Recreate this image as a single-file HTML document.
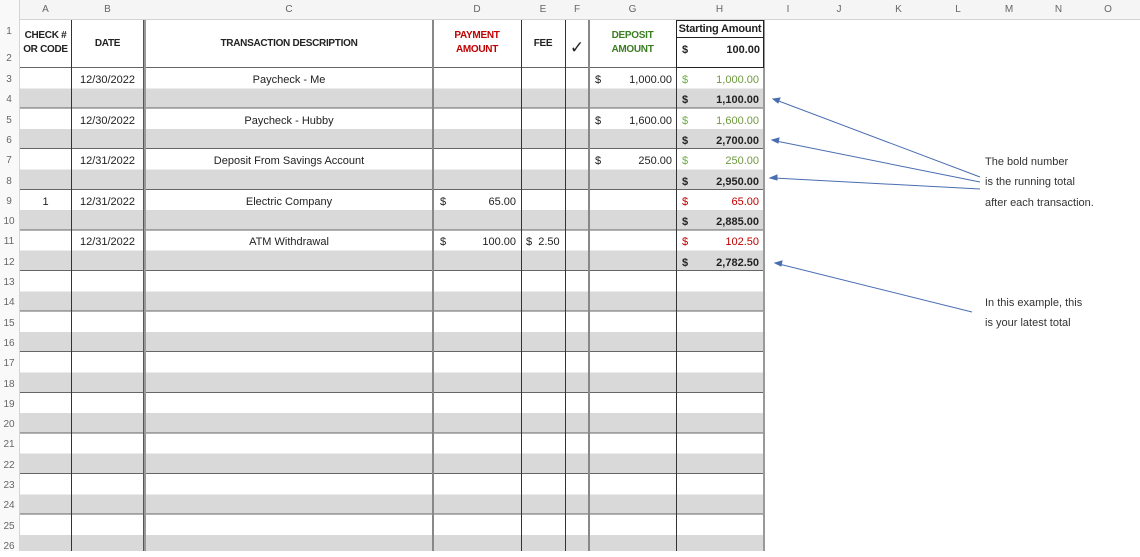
<!DOCTYPE html>
<html><head><meta charset="utf-8"><style>
*{margin:0;padding:0;box-sizing:border-box}
body{width:1140px;height:551px;overflow:hidden;background:#fff;position:relative;font-family:"Liberation Sans",sans-serif;color:#222}
.a{position:absolute;white-space:nowrap}
.ch{top:0;height:20px;font-size:10px;color:#666;text-align:center;line-height:20px}
.rh{left:0;width:18px;font-size:10px;color:#666;text-align:center;height:20px;line-height:20px}
.v{position:absolute;top:20px;bottom:0;width:1px;background:#333}
.t{font-size:11px;line-height:20px;height:20px}
.hd{font-weight:bold;font-size:10px;text-align:center;line-height:14px;letter-spacing:-0.3px}
</style></head><body>
<div class="a" style="left:0;top:0;width:1140px;height:20px;background:#f5f5f5;border-bottom:1px solid #d4d4d4"></div>
<div class="a" style="left:0;top:0;width:20px;height:551px;background:#f9f9f9;border-right:1px solid #d4d4d4"></div>
<div class="a" style="left:20px;top:68px;width:744px;height:483px;background:repeating-linear-gradient(to bottom,#fff 0,#fff 20.3px,#d9d9d9 20.3px,#d9d9d9 39.6px,#666 39.6px,#666 40.6px)"></div>
<div class="a" style="left:20px;top:67px;width:744px;height:1px;background:#666"></div>
<div class="a ch" style="left:20px;width:51px">A</div>
<div class="a ch" style="left:71px;width:73px">B</div>
<div class="a ch" style="left:145px;width:288px">C</div>
<div class="a ch" style="left:433px;width:88px">D</div>
<div class="a ch" style="left:521px;width:44px">E</div>
<div class="a ch" style="left:565px;width:24px">F</div>
<div class="a ch" style="left:589px;width:87px">G</div>
<div class="a ch" style="left:676px;width:87px">H</div>
<div class="a ch" style="left:763px;width:50px">I</div>
<div class="a ch" style="left:813px;width:52px">J</div>
<div class="a ch" style="left:865px;width:67px">K</div>
<div class="a ch" style="left:932px;width:52px">L</div>
<div class="a ch" style="left:984px;width:50px">M</div>
<div class="a ch" style="left:1034px;width:49px">N</div>
<div class="a ch" style="left:1083px;width:50px">O</div>
<div class="a rh" style="top:22px">1</div>
<div class="a rh" style="top:49px">2</div>
<div class="a rh" style="top:70px">3</div><div class="a rh" style="top:90.3px">4</div><div class="a rh" style="top:110.6px">5</div><div class="a rh" style="top:130.9px">6</div><div class="a rh" style="top:151.2px">7</div><div class="a rh" style="top:171.5px">8</div><div class="a rh" style="top:191.8px">9</div><div class="a rh" style="top:212.1px">10</div><div class="a rh" style="top:232.4px">11</div><div class="a rh" style="top:252.7px">12</div><div class="a rh" style="top:273px">13</div><div class="a rh" style="top:293.3px">14</div><div class="a rh" style="top:313.6px">15</div><div class="a rh" style="top:333.9px">16</div><div class="a rh" style="top:354.2px">17</div><div class="a rh" style="top:374.5px">18</div><div class="a rh" style="top:394.8px">19</div><div class="a rh" style="top:415.1px">20</div><div class="a rh" style="top:435.4px">21</div><div class="a rh" style="top:455.7px">22</div><div class="a rh" style="top:476px">23</div><div class="a rh" style="top:496.3px">24</div><div class="a rh" style="top:516.6px">25</div><div class="a rh" style="top:536.9px">26</div>
<div class="v" style="left:71px"></div>
<div class="v" style="left:143px;width:3px;background:#999;border-left:1px solid #555"></div>
<div class="v" style="left:432px;width:2px;background:#888"></div>
<div class="v" style="left:521px"></div>
<div class="v" style="left:565px"></div>
<div class="v" style="left:588px;width:2px;background:#888"></div>
<div class="v" style="left:676px"></div>
<div class="v" style="left:763px;width:2px;background:#999"></div>
<div class="a" style="left:676px;top:20px;width:88px;height:48px;border:1px solid #222;background:#fff"></div>
<div class="a" style="left:676px;top:37px;width:88px;height:1px;background:#222"></div>
<div class="a" style="left:676px;top:21px;width:88px;text-align:center;font-size:11px;font-weight:bold;line-height:16px;letter-spacing:-0.2px">Starting Amount</div>
<div class="a" style="left:682px;top:44px;font-size:11px;font-weight:bold">$</div>
<div class="a" style="left:676px;top:44px;width:84px;text-align:right;font-size:11px;font-weight:bold">100.00</div>
<div class="a hd" style="left:20px;top:29px;width:51px">CHECK #<br>OR CODE</div>
<div class="a hd" style="left:71px;top:37px;width:73px">DATE</div>
<div class="a hd" style="left:145px;top:37px;width:288px">TRANSACTION DESCRIPTION</div>
<div class="a hd" style="left:433px;top:29px;width:88px;color:#c00000">PAYMENT<br>AMOUNT</div>
<div class="a hd" style="left:521px;top:37px;width:44px">FEE</div>
<div class="a" style="left:565px;top:38px;width:24px;text-align:center;font-size:17px;font-family:'DejaVu Sans',sans-serif">✓</div>
<div class="a hd" style="left:589px;top:29px;width:87px;color:#3a7d22">DEPOSIT<br>AMOUNT</div>
<div class="a t" style="left:71px;top:70px;width:73px;text-align:center">12/30/2022</div>
<div class="a t" style="left:145px;top:70px;width:288px;text-align:center">Paycheck - Me</div>
<div class="a t" style="left:595px;top:70px">$</div><div class="a t" style="left:589px;top:70px;width:83px;text-align:right">1,000.00</div>
<div class="a t" style="left:682px;top:70px;color:#70ad47">$</div><div class="a t" style="left:676px;top:70px;width:83px;text-align:right;color:#6f9a3f">1,000.00</div>
<div class="a t" style="left:682px;top:90.3px;font-weight:bold">$</div><div class="a t" style="left:676px;top:90.3px;width:83px;text-align:right;font-weight:bold">1,100.00</div>
<div class="a t" style="left:71px;top:110.6px;width:73px;text-align:center">12/30/2022</div>
<div class="a t" style="left:145px;top:110.6px;width:288px;text-align:center">Paycheck - Hubby</div>
<div class="a t" style="left:595px;top:110.6px">$</div><div class="a t" style="left:589px;top:110.6px;width:83px;text-align:right">1,600.00</div>
<div class="a t" style="left:682px;top:110.6px;color:#70ad47">$</div><div class="a t" style="left:676px;top:110.6px;width:83px;text-align:right;color:#6f9a3f">1,600.00</div>
<div class="a t" style="left:682px;top:130.9px;font-weight:bold">$</div><div class="a t" style="left:676px;top:130.9px;width:83px;text-align:right;font-weight:bold">2,700.00</div>
<div class="a t" style="left:71px;top:151.2px;width:73px;text-align:center">12/31/2022</div>
<div class="a t" style="left:145px;top:151.2px;width:288px;text-align:center">Deposit From Savings Account</div>
<div class="a t" style="left:595px;top:151.2px">$</div><div class="a t" style="left:589px;top:151.2px;width:83px;text-align:right">250.00</div>
<div class="a t" style="left:682px;top:151.2px;color:#70ad47">$</div><div class="a t" style="left:676px;top:151.2px;width:83px;text-align:right;color:#6f9a3f">250.00</div>
<div class="a t" style="left:682px;top:171.5px;font-weight:bold">$</div><div class="a t" style="left:676px;top:171.5px;width:83px;text-align:right;font-weight:bold">2,950.00</div>
<div class="a t" style="left:20px;top:191.8px;width:51px;text-align:center">1</div>
<div class="a t" style="left:71px;top:191.8px;width:73px;text-align:center">12/31/2022</div>
<div class="a t" style="left:145px;top:191.8px;width:288px;text-align:center">Electric Company</div>
<div class="a t" style="left:440px;top:191.8px">$</div><div class="a t" style="left:433px;top:191.8px;width:83px;text-align:right">65.00</div>
<div class="a t" style="left:682px;top:191.8px;color:#c00000">$</div><div class="a t" style="left:676px;top:191.8px;width:83px;text-align:right;color:#c00000">65.00</div>
<div class="a t" style="left:682px;top:212.1px;font-weight:bold">$</div><div class="a t" style="left:676px;top:212.1px;width:83px;text-align:right;font-weight:bold">2,885.00</div>
<div class="a t" style="left:71px;top:232.4px;width:73px;text-align:center">12/31/2022</div>
<div class="a t" style="left:145px;top:232.4px;width:288px;text-align:center">ATM Withdrawal</div>
<div class="a t" style="left:440px;top:232.4px">$</div><div class="a t" style="left:433px;top:232.4px;width:83px;text-align:right">100.00</div>
<div class="a t" style="left:526px;top:232.4px">$ &nbsp;2.50</div>
<div class="a t" style="left:682px;top:232.4px;color:#c00000">$</div><div class="a t" style="left:676px;top:232.4px;width:83px;text-align:right;color:#c00000">102.50</div>
<div class="a t" style="left:682px;top:252.7px;font-weight:bold">$</div><div class="a t" style="left:676px;top:252.7px;width:83px;text-align:right;font-weight:bold">2,782.50</div>
<div class="a" style="left:985px;top:152px;font-size:11px;line-height:20.3px;color:#333">The bold number<br>is the running total<br>after each transaction.</div>
<div class="a" style="left:985px;top:293px;font-size:11px;line-height:20.3px;color:#333">In this example, this<br>is your latest total</div>
<svg class="a" style="left:0;top:0" width="1140" height="551">
<g stroke="#4a6eb0" stroke-width="1" fill="#4a6eb0">
<line x1="980" y1="177" x2="776" y2="100"/><polygon points="773,99 780,98 778,103"/>
<line x1="980" y1="182" x2="776" y2="141"/><polygon points="772,140 779,138 778,143"/>
<line x1="980" y1="189" x2="774" y2="178"/><polygon points="770,178 777,175 777,180"/>
<line x1="972" y1="312" x2="779" y2="264"/><polygon points="775,263 782,261 781,266"/>
</g></svg>
</body></html>
